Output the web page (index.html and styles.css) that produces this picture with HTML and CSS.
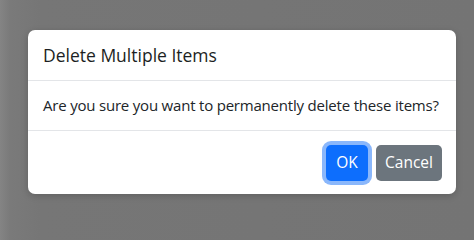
FILE: index.html
```html
<!DOCTYPE html>
<html lang="en">
<head>
<meta charset="utf-8">
<title>Delete Multiple Items</title>
<link rel="stylesheet" href="styles.css">
</head>
<body>
<div class="backdrop">
  <div class="modal" role="dialog" aria-labelledby="modal-title">
    <div class="modal-header">
      <h5 class="modal-title" id="modal-title">Delete Multiple Items</h5>
    </div>
    <div class="modal-body">
      <p class="modal-text">Are you sure you want to permanently delete these items?</p>
    </div>
    <div class="modal-footer">
      <button type="button" class="btn btn-primary">OK</button>
      <button type="button" class="btn btn-secondary">Cancel</button>
    </div>
  </div>
</div>
</body>
</html>
```
FILE: styles.css
```css
html, body {
  margin: 0;
  padding: 0;
  height: 100%;
}
body {
  font-family: "Open Sans", "Noto Sans", sans-serif;
  color: #212529;
  background: linear-gradient(to right, #848484 0, #7a7a7a 10px, #767676 40px, #747474 100%);
}
.backdrop {
  display: flex;
  align-items: flex-start;
  padding: 30px 18px 0 28px;
  box-sizing: border-box;
  height: 100%;
}
.modal {
  width: 428px;
  background: #fff;
  border-radius: 7px;
  box-shadow: 0 2px 7px rgba(0, 0, 0, 0.18);
  overflow: hidden;
}
.modal-header {
  height: 50px;
  display: flex;
  align-items: center;
  padding: 0 15px;
  border-bottom: 1px solid #e3e5e8;
}
.modal-title {
  margin: 0;
  font-size: 17.5px;
  font-weight: 500;
  color: #1c1f23;
  line-height: 1.2;
  white-space: nowrap;
}
.modal-body {
  height: 50px;
  display: flex;
  align-items: center;
  padding: 1px 15px 0;
  box-sizing: border-box;
  border-bottom: 1px solid #e3e5e8;
}
.modal-text {
  margin: 0;
  font-size: 15px;
  letter-spacing: -0.2px;
  line-height: 1.3;
  color: #212529;
  white-space: nowrap;
}
.modal-footer {
  display: flex;
  justify-content: flex-end;
  gap: 8px;
  padding: 14px 14px 13px;
}
.btn {
  font-family: inherit;
  font-size: 15.5px;
  line-height: 1;
  height: 36px;
  padding: 0 9px;
  border: none;
  border-radius: 5px;
  color: #fff;
  cursor: pointer;
}
.btn-primary {
  background: #0d6efd;
  min-width: 42px;
  box-shadow: 0 0 0 4px #8ab7fb;
}
.btn-secondary {
  background: #6c757d;
  min-width: 66px;
}
```
